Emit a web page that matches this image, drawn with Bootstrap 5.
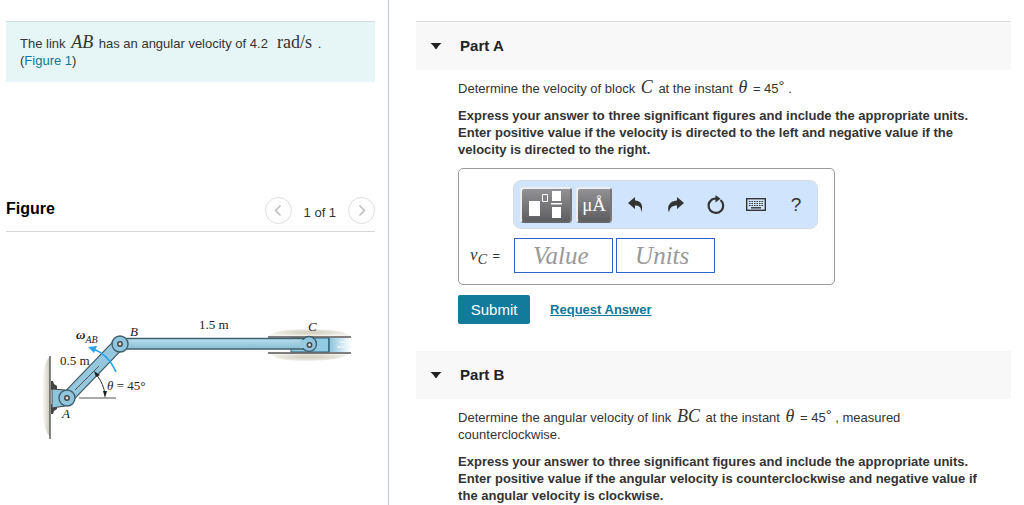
<!DOCTYPE html>
<html lang="en">
<head>
<meta charset="utf-8">
<meta name="viewport" content="width=device-width, initial-scale=1">
<title>Velocity of block C</title>
<link rel="stylesheet" href="https://cdn.jsdelivr.net/npm/bootstrap@5.3.0/dist/css/bootstrap.min.css">
<style>
  body { font: 13px/17px "Liberation Sans", Arial, sans-serif; color: #333; background: #fff; }
  a { color: #0f7799; }
  .problem-pane { flex: 0 0 38%; padding: 21px 13px 0 6px; border-right: 1px solid #b8cce4; }
  .answer-pane { flex: 1 1 0; min-width: 0; padding: 21px 13px 0 27px; }
  .intro { background: #e6f5f6; border-top: 1px solid #d5dcdd; padding: 13px 14px; margin-bottom: 115px; }
  .intro a { text-decoration: none; }
  .math { font: italic 18px/1px "Liberation Serif", "Times New Roman", serif; margin: 0 2px; }
  .math.upright { font-style: normal; }
  .math.symbol { font-size: 17px; }
  .math sub { font-size: 14px; }
  .deg { font-size: 15px; line-height: 1px; vertical-align: 2px; }
  .figure-head { border-bottom: 1px solid #d6d6d6; padding-bottom: 7px; margin-bottom: 78px; }
  .figure-head h2 { font-size: 16px; line-height: 20px; font-weight: bold; color: #000; }
  .pager button { width: 27px; height: 27px; border: 1px solid #dedede; color: #bbb; background: #fff; }
  .linkage { max-width: 320px; margin-left: 34px; }
  .linkage text { font-family: "Liberation Serif", "Times New Roman", serif; font-size: 13px; fill: #222; }
  .part-head { background: #f8f8f8; height: 48px; padding-left: 14px; gap: 18px; }
  .part-head.first { border-top: 1px solid #ddd; height: 49px; }
  .part-head button { border: 0; padding: 0; background: none; line-height: 0; color: #222; }
  .part-head h2 { font-size: 15px; line-height: 20px; font-weight: bold; color: #222; }
  .part-body { padding: 10px 23px 0 42px; }
  .part-body p { margin-bottom: 10px; }
  .answer-box { display: grid; grid-template-columns: 43px minmax(0, 1fr); row-gap: 9px; align-items: center; max-width: 377px; border: 1px solid #999; border-radius: 5px; padding: 11px 16px 11px 11px; margin-bottom: 10px; }
  .tools { grid-column: 2; height: 49px; background: #d0e5fd; border: 1px solid #d6dbe2; border-radius: 8px; padding: 0 0 0 6px; }
  .tools button { border: 0; padding: 0; color: #333; background: none; width: 40px; height: 36px; line-height: 0; }
  .tools .tile { width: 36px; border: 2px solid #eee; border-right-color: #777; border-bottom-color: #666; border-radius: 4px; background: linear-gradient(#929296, #5e5e60); color: #fff; }
  .tools .tile.wide { width: 52px; }
  .tools .tile span { font: 19px/32px "Liberation Serif", "Times New Roman", serif; }
  .tools .help { font-size: 19px; line-height: 36px; }
  .fields { gap: 3px; padding-left: 1px; }
  .fields input { width: 99px; height: 35px; border: 1px solid #2d63c8; padding: 0 0 0 18px; font: italic 25px "Liberation Serif", "Times New Roman", serif; }
  .fields input::placeholder { color: #999; }
  .submit { background: #127a9a; color: #fff; border: 0; border-radius: 2px; width: 72px; height: 29px; font-size: 15px; }
  .actions { gap: 20px; margin-bottom: 27px; }
  .actions a { font-weight: bold; }
</style>
</head>
<body>
<div class="d-flex min-vh-100">
  <aside class="problem-pane">
    <div class="intro">The link <span class="math">AB</span> has an angular velocity of 4.2&nbsp; <span class="math upright">rad/s</span> .<br>(<a href="#linkage">Figure 1</a>)</div>
    <div class="figure-head d-flex align-items-center justify-content-between">
      <h2 class="mb-1">Figure</h2>
      <div class="pager d-flex align-items-center gap-2">
        <button type="button" class="rounded-circle p-0 d-flex align-items-center justify-content-center" aria-label="Previous figure"><svg width="13" height="13" viewBox="0 0 13 13" fill="none" stroke="currentColor" stroke-width="1.5"><path d="M8.5 1.5 3.5 6.5l5 5"/></svg></button>
        <span class="px-1 pt-1">1 of 1</span>
        <button type="button" class="rounded-circle p-0 d-flex align-items-center justify-content-center" aria-label="Next figure"><svg width="13" height="13" viewBox="0 0 13 13" fill="none" stroke="currentColor" stroke-width="1.5"><path d="M4.5 1.5l5 5-5 5"/></svg></button>
      </div>
    </div>
    <div class="linkage" id="linkage">
      <svg class="w-100 d-block" viewBox="40 310 320 135" role="img" aria-label="Link AB joined to rod BC and sliding block C">
        <defs>
          <linearGradient id="wall"><stop offset="0" stop-color="#fff"/><stop offset="1" stop-color="#cbc9b9"/></linearGradient>
          <linearGradient id="rod" x2="0" y2="1"><stop offset="0" stop-color="#b9dfee"/><stop offset="1" stop-color="#86bdd4"/></linearGradient>
          <linearGradient id="fade"><stop offset="0" stop-color="#8cc5de"/><stop offset="1" stop-color="#fff"/></linearGradient>
          <radialGradient id="ground"><stop offset=".3" stop-color="#d6d5c8"/><stop offset="1" stop-color="#f3f2ed"/></radialGradient>
        </defs>
        <path d="M50 357c-7 4-8 25-8 43s3 34 8 36z" fill="url(#wall)"/>
        <path d="M50 356v83" stroke="#555" stroke-width="1.4"/>
        <path d="M51 381h2l1 3 3 2v4l-3-1-3 1zM51 414h2l1-3 3-2v-5l-3 1-3-1z" fill="#444"/>
        <path d="M52 389l13 1v16l-13 2z" fill="#8fc5dd" stroke="#444"/>
        <path d="M269 336c6-6 22-7 38-7s38 1 43 7z" fill="url(#ground)"/>
        <path d="M269 353c6 7 22 8 38 8s38-2 43-8z" fill="url(#ground)"/>
        <path d="M291 338h38v14h-38z" fill="#91cae4" stroke="#2d6075"/>
        <path d="M329.500 338h21v14h-21z" fill="url(#fade)"/>
        <path d="M329 338v14" stroke="#2d6075" stroke-width="1.400"/>
        <path d="M340 342h10M337 347h14" stroke="#e8f6fc" stroke-width="1.500"/>
        <path d="M268 337h83M268 353h83" stroke="#555" stroke-width="1.3"/>
        <path d="M122 338.500h182v10.500H122z" fill="url(#rod)" stroke="#43616d" stroke-width="1.3"/>
        <path d="M67 398 120 343" stroke="#435b65" stroke-width="13"/>
        <path d="M67 398 120 343" stroke="#95c8de" stroke-width="10.500"/>
        <g fill="#8fc5de" stroke="#405f6d" stroke-width="1.4"><circle cx="67" cy="398" r="8"/><circle cx="120" cy="344" r="8"/><circle cx="309" cy="344" r="7.500"/></g>
        <path d="M308 340h-8v8h8z" fill="#98cadf"/>
        <g fill="#ddd" stroke="#454545" stroke-width="1.500"><circle cx="67" cy="398" r="2.200"/><circle cx="120" cy="344" r="2.200"/><circle cx="309.500" cy="345" r="2.200"/></g>
        <path d="M75 390 99 366M79 398h37" stroke="#555" fill="none"/>
        <path d="M96 374q8 10 9 21" stroke="#333" fill="none"/>
        <path d="m94 371 6 4-4 2zM105 398l-2-7h4z" fill="#222"/>
        <path d="M116 372Q108 354 93 349" stroke="#27a5e8" stroke-width="1.700" fill="none"/>
        <path d="m88 347 9-1-3 7z" fill="#27a5e8"/>
        <text x="76" y="339" font-style="italic"><tspan font-weight="bold">ω</tspan><tspan dy="4" style="font-size:10px">AB</tspan></text>
        <text x="130" y="336" font-style="italic">B</text>
        <text x="60" y="365">0.5 m</text>
        <text x="199" y="329">1.5 m</text>
        <text x="308" y="331" font-style="italic">C</text>
        <text x="62" y="418" font-style="italic">A</text>
        <text x="107" y="390"><tspan font-style="italic">θ</tspan> = 45°</text>
      </svg>
    </div>
  </aside>

  <main class="answer-pane">
    <section>
      <div class="part-head first d-flex align-items-center">
        <button type="button" aria-label="Collapse Part A"><svg width="12" height="7" viewBox="0 0 12 7"><path d="M.5 0h11Q9 2 6.500 6h-1Q3 2 .5 0z" fill="currentColor"/></svg></button>
        <h2 class="mb-0">Part A</h2>
      </div>
      <div class="part-body">
        <p>Determine the velocity of block <span class="math">C</span> at the instant <span class="math">θ</span> = 45<span class="deg">°</span> .</p>
        <p class="fw-bold">Express your answer to three significant figures and include the appropriate units. Enter positive value if the velocity is directed to the left and negative value if the velocity is directed to the right.</p>
        <div class="answer-box">
          <div class="tools d-flex align-items-center">
            <button type="button" class="tile wide me-1" aria-label="Templates"><svg width="34" height="28" viewBox="0 0 34 28"><path d="M0 10h11v15H0zM23 0h9v10h-9zM23 16h9v11h-9zM22 12h11v1.500H22z" fill="#fff"/><path d="M13.500 3.500h5v7h-5z" fill="none" stroke="#fff"/></svg></button>
            <button type="button" class="tile me-1" aria-label="Symbols"><span>μÅ</span></button>
            <button type="button" aria-label="Undo"><svg width="16" height="16" viewBox="0 0 16 16"><path d="M0 6 7 0v3.500c6 .2 9 5 6 12C13.500 11 12 8.500 7 8.500V12z" fill="currentColor"/></svg></button>
            <button type="button" aria-label="Redo"><svg width="16" height="16" viewBox="0 0 16 16"><path d="M16 6 9 0v3.500c-6 .2-11 5-8 12C1.500 11 4 8.500 9 8.500V12z" fill="currentColor"/></svg></button>
            <button type="button" aria-label="Reset"><svg width="20" height="20" viewBox="0 0 20 20"><path d="M14.500 5a7.300 7.300 0 1 1-9-.2Q8 3.500 10.500 3.500" fill="none" stroke="currentColor" stroke-width="2.200"/><path d="m9.500 0 5 3.800-5 3.800z" fill="currentColor"/></svg></button>
            <button type="button" aria-label="Keyboard"><svg width="20" height="13" viewBox="0 0 20 13" fill="none" stroke="currentColor"><rect x=".7" y=".7" width="18.600" height="11.600" stroke-width="1.400"/><path d="M3 3.500h14M3 5.500h14M3 7.500h14" stroke-width="1.200" stroke-dasharray="1.500 1"/><path d="M5 9.800h10" stroke-width="1.400"/></svg></button>
            <button type="button" class="help" aria-label="Help">?</button>
          </div>
          <div><span class="math symbol ms-0">v<sub>C</sub></span> =</div>
          <div class="fields d-flex">
            <input type="text" placeholder="Value" aria-label="Value">
            <input type="text" placeholder="Units" aria-label="Units">
          </div>
        </div>
        <div class="actions d-flex align-items-center">
          <button type="button" class="submit p-0">Submit</button>
          <a href="#request">Request Answer</a>
        </div>
      </div>
    </section>
    <section>
      <div class="part-head d-flex align-items-center">
        <button type="button" aria-label="Collapse Part B"><svg width="12" height="7" viewBox="0 0 12 7"><path d="M.5 0h11Q9 2 6.500 6h-1Q3 2 .5 0z" fill="currentColor"/></svg></button>
        <h2 class="mb-0">Part B</h2>
      </div>
      <div class="part-body">
        <p>Determine the angular velocity of link <span class="math">BC</span> at the instant <span class="math">θ</span> = 45<span class="deg">°</span> , measured counterclockwise.</p>
        <p class="fw-bold mb-0">Express your answer to three significant figures and include the appropriate units. Enter positive value if the angular velocity is counterclockwise and negative value if the angular velocity is clockwise.</p>
      </div>
    </section>
  </main>
</div>
<script src="https://cdn.jsdelivr.net/npm/bootstrap@5.3.0/dist/js/bootstrap.bundle.min.js"></script>
</body>
</html>
